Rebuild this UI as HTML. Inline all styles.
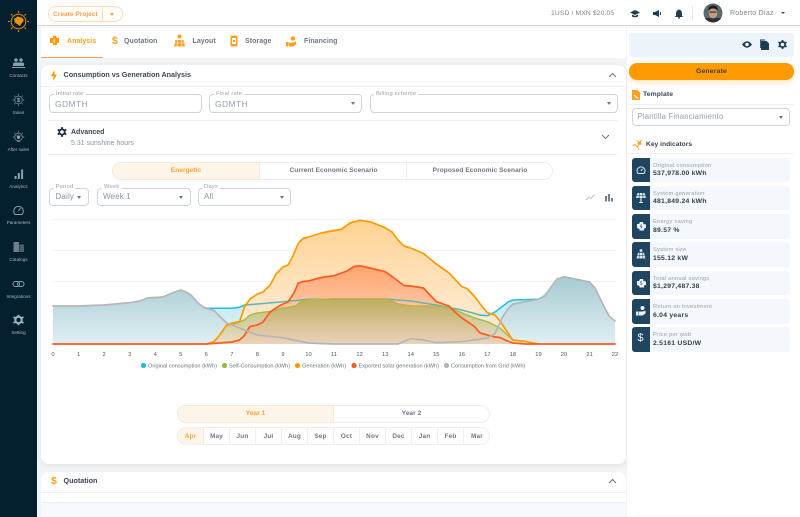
<!DOCTYPE html>
<html><head><meta charset="utf-8"><style>
*{box-sizing:border-box}
html,body{margin:0;padding:0}
body{width:800px;height:517px;overflow:hidden;position:relative;background:#f3f4f6;font-family:"Liberation Sans",sans-serif;color:#3c4654}
#w{position:absolute;left:0;top:0;width:800px;height:517px;overflow:hidden;filter:blur(.3px)}
.a{position:absolute}
.t{position:absolute;white-space:nowrap;line-height:1}
.b{font-weight:700}
.box{position:absolute;border:1px solid #cfd5dd;border-radius:4px;background:#fff}
.lab{position:absolute;background:#fff;padding:0 2px;font-size:5.8px;color:#9aa2ad;white-space:nowrap;line-height:7px;letter-spacing:.2px}
.val{position:absolute;font-size:8.5px;color:#9aa2ad;white-space:nowrap;letter-spacing:.4px;line-height:10px}
.sel{font-size:8px;letter-spacing:.15px;color:#8b93a0}
.car{position:absolute;width:0;height:0;border-left:2.6px solid transparent;border-right:2.6px solid transparent;border-top:3px solid #6d7580}
.line{position:absolute;height:1px;background:#eff0f2}
.side{position:absolute;left:0;width:37px;text-align:center;font-size:4.6px;color:#a9b6be;line-height:6px}
.side svg{position:absolute;left:12px;top:-16px}
.seg{position:absolute;text-align:center;font-weight:700;font-size:6.6px;color:#6f7885;letter-spacing:.05px}
.m{position:absolute;top:0;height:18px;width:26px;border-right:1px solid #eceef0;text-align:center;font-size:6.4px;font-weight:700;color:#6f7885;line-height:17px;letter-spacing:.2px}
.ki{position:absolute;left:632px;width:158px;height:24.5px;background:#f4f7fb;border-radius:3px}
.ki i{position:absolute;left:0;top:0;width:18px;height:100%;background:#1f4560;border-radius:3px 0 0 3px}
.ki svg{position:absolute;left:4px;top:7px}
.ki span{position:absolute;left:21px;top:5px;font-size:5.8px;color:#9aa2ad;white-space:nowrap;letter-spacing:.2px;line-height:7px}
.ki b{position:absolute;left:21px;top:12.5px;font-size:6.8px;color:#34404d;white-space:nowrap;letter-spacing:.25px;line-height:8px}
.tab{position:absolute;top:37px;font-size:7px;font-weight:700;color:#6f7885;line-height:9px;white-space:nowrap;letter-spacing:.05px}
</style></head><body><div id="w">

<!-- top bar -->
<div class="a" style="left:37px;top:0;width:763px;height:26px;background:#fff;border-bottom:1px solid #d6d8da"></div>
<div class="a" style="left:48px;top:6px;width:75px;height:16px;border:1px solid #ffdcb0;border-radius:8px;background:#fff"></div>
<div class="a" style="left:102px;top:7px;width:1px;height:14px;background:#ffdcb0"></div>
<div class="t b" style="left:53px;top:12px;font-size:6.6px;color:#ff9f40">Create Project</div>
<div class="car" style="left:110px;top:13px;border-top-color:#ff9f40"></div>
<div class="t" style="left:551px;top:11px;font-size:6.8px;color:#7e8691;letter-spacing:.1px">1USD / MXN $20.05</div>
<svg class="a" style="left:630px;top:8px" width="55" height="11" viewBox="0 0 55 11" fill="#1f3d52"><path d="M5 2 10 4.5 5 7 0 4.5Z"/><path d="M2 6.500V8.500Q5 10 8 8.500V6.500L5 8Z"/><path d="M23 4h2l4-2v7l-4-2h-2z"/><rect x="30" y="4" width="1" height="3"/><path d="M49 1.500Q52 2 52 6V8L53.500 9H44.500L46 8V6Q46 2 49 1.500Z"/><rect x="48" y="9.200" width="2" height="1.300"/></svg>
<div class="a" style="left:692px;top:6px;width:1px;height:14px;background:#e3e5e8"></div>
<svg class="a" style="left:703px;top:3px" width="20" height="20" viewBox="0 0 20 20"><defs><clipPath id="av"><circle cx="10" cy="10" r="9.500"/></clipPath></defs><g clip-path="url(#av)"><rect width="20" height="20" fill="#5b6a6e"/><rect y="15" width="20" height="5" fill="#2b3338"/><ellipse cx="10" cy="10" rx="4.300" ry="5.500" fill="#c79a7e"/><path d="M5.500 8Q5 2.500 10 2.500T14.500 8Q13 5.500 10 5.500T5.500 8Z" fill="#1d1d1f"/><rect x="6.500" y="8.500" width="7" height="1.100" fill="#2a2a2a"/></g></svg>
<div class="t" style="left:730px;top:9.500px;font-size:7px;color:#7e8691;letter-spacing:.2px">Roberto Díaz</div>
<div class="car" style="left:781px;top:12px;border-left-width:2px;border-right-width:2px;border-top:2.500px solid #3c4654"></div>

<!-- sidebar -->
<div class="a" style="left:0;top:0;width:37px;height:517px;background:#04202f"></div>
<svg class="a" style="left:8px;top:11px" width="21" height="21" viewBox="0 0 21 21" fill="none" stroke="#d98a0c"><circle cx="10.500" cy="10.500" r="7.300" stroke-width="1"/><path d="M6 8l3.500-2.500 4.500 1 2 3-2.500 3-1.500 2.500-2.500-1.800-2.500-1.500z" fill="#e8930f" stroke="none"/><path d="M10.500 0v2M10.500 19v2M0 10.500h2M19 10.500h2M3 3l1.500 1.500M16.500 16.500 18 18M18 3l-1.500 1.500M4.500 16.500 3 18" stroke-width="1.100"/></svg>

<div class="side" style="top:73px"><svg width="13" height="12" viewBox="0 0 13 12" fill="#8ea0ab"><circle cx="4" cy="3" r="1.700"/><circle cx="9" cy="3" r="1.700"/><path d="M1 9V7q0-1.500 2-1.500h7q2 0 2 1.500v2zM0 10h13v1H0z"/></svg>Contacts</div>
<div class="side" style="top:110px"><svg width="13" height="12" viewBox="0 0 13 12" fill="none" stroke="#6d818d" stroke-width=".9"><circle cx="6.500" cy="6" r="3.800"/><path d="M6.500 0v1.500M6.500 10.500V12M.8 6h1.500M10.700 6h1.500M2.200 1.700l1 1M9.800 9.300l1 1M10.800 1.700l-1 1M3.200 9.300l-1 1"/><path d="M7.700 4.500H5.800v1.500h1.500v1.500H5.300" stroke="#8ea0ab"/></svg>Sales</div>
<div class="side" style="top:147px"><svg width="13" height="12" viewBox="0 0 13 12" fill="none" stroke="#6d818d" stroke-width=".9"><circle cx="6.500" cy="6" r="3.800"/><path d="M6.500 0v1.500M.8 6h1.500M10.700 6h1.500M2.200 1.700l1 1M10.800 1.700l-1 1M5 10.500h3"/><path d="M4.500 4.500h4L7.500 8h-2z" fill="#8ea0ab" stroke="none"/></svg>After sales</div>
<div class="side" style="top:184px"><svg width="13" height="12" viewBox="0 0 13 12" fill="#8ea0ab"><rect x="2.500" y="8" width="2" height="3"/><rect x="5.800" y="5" width="2" height="6"/><rect x="9.100" y="1.500" width="2" height="9.500"/></svg>Analytics</div>
<div class="side" style="top:220px"><svg width="13" height="12" viewBox="0 0 13 12" fill="none" stroke="#8ea0ab"><path d="M3 10.500A4.800 4.800 0 1 1 10 10.500Z"/><path d="M6.500 7 8.500 4"/></svg>Parameters</div>
<div class="side" style="top:257px"><svg width="13" height="12" viewBox="0 0 13 12" fill="#6d818d"><rect x="1.500" y="1" width="5.500" height="10"/><rect x="7.500" y="3.500" width="4.500" height="7.500" fill="#4a606d"/></svg>Catalogs</div>
<div class="side" style="top:294px"><svg width="13" height="12" viewBox="0 0 13 12" fill="none" stroke="#8ea0ab"><rect x="1" y="3.500" width="6.500" height="5" rx="2.500"/><rect x="5.500" y="3.500" width="6.500" height="5" rx="2.500"/></svg>Integrations</div>
<div class="side" style="top:330px"><svg width="13" height="12" viewBox="0 0 13 12" fill="none"><circle cx="6.500" cy="6" r="3.200" stroke="#a3b1ba" stroke-width="2"/><path d="M6.500 .8v2M6.500 9.200v2M1.500 3l1.700 1M9.800 8l1.700 1M11.500 3 9.800 4M3.200 8l-1.700 1" stroke="#a3b1ba" stroke-width="1.800"/></svg>Setting</div>

<!-- tabs strip -->
<div class="a" style="left:41px;top:27px;width:585px;height:31px;background:#fff"></div>
<div class="a" style="left:41px;top:57px;width:62px;height:1px;background:#ff9f40"></div>
<svg class="a" style="left:49px;top:35px" width="11" height="11" viewBox="0 0 11 11" fill="#ff9800"><path d="M1 3h3V1h3l1 2h2v5H8v2H4V8H1z"/><path d="M5.500 3.500 4.500 6H6L5 8.500" stroke="#fff" stroke-width=".6" fill="none"/></svg>
<div class="tab" style="left:67px;color:#ff9f1f">Analysis</div>
<div class="t b" style="left:112px;top:35.500px;font-size:10.500px;color:#ff9f1f">$</div>
<div class="tab" style="left:124px">Quotation</div>
<svg class="a" style="left:173px;top:34px" width="13" height="13" viewBox="0 0 13 13" fill="#ff9f1f"><circle cx="6.500" cy="2.500" r="2"/><path d="M2.500 6h8l1.500 6.500H1z"/><path d="M0 9h13M4.500 6 4 13M8.500 6 9 13" stroke="#fff" stroke-width=".6"/></svg>
<div class="tab" style="left:192.500px">Layout</div>
<svg class="a" style="left:230px;top:35px" width="9" height="12" viewBox="0 0 9 12"><rect x=".5" y=".5" width="7" height="11" rx="1" fill="#ff9f1f"/><rect x="2" y="3" width="4" height="6" fill="#fff"/><rect x="3" y="5" width="2" height="2" fill="#ff9f1f"/></svg>
<div class="tab" style="left:245px">Storage</div>
<svg class="a" style="left:286px;top:36px" width="11" height="11" viewBox="0 0 11 11" fill="#ff9f1f"><circle cx="7" cy="2.500" r="2.200"/><rect x="0" y="6" width="2.500" height="4.500"/><path d="M3 6.500h4l3-1v3L7 10.500H3z"/></svg>
<div class="tab" style="left:304px">Financing</div>

<!-- main card -->
<div class="a" style="left:41px;top:65px;width:585px;height:399px;background:#fff;border-radius:8px;box-shadow:0 2px 6px rgba(60,70,80,.1)"></div>
<svg class="a" style="left:51px;top:70px" width="6" height="11" viewBox="0 0 6 11" fill="#ff9800"><path d="M3.500 0 0 6h2.500L2 11 6 4.500H3.500z"/></svg>
<div class="t b" style="left:63.500px;top:71px;font-size:7.200px;color:#3c4654">Consumption vs Generation Analysis</div>
<svg class="a" style="left:608px;top:72px" width="9" height="6" viewBox="0 0 9 6" fill="none" stroke="#6d7580" stroke-width="1"><path d="M1 5 4.500 1.500 8 5"/></svg>
<div class="line" style="left:41px;top:86px;width:585px"></div>

<div class="box" style="left:48.500px;top:94px;width:153px;height:18.500px"></div>
<div class="lab" style="left:54px;top:90.500px">Initial rate</div>
<div class="val" style="left:55px;top:98.500px">GDMTH</div>
<div class="box" style="left:208.500px;top:94px;width:153px;height:18.500px"></div>
<div class="lab" style="left:214px;top:90.500px">Final rate</div>
<div class="val" style="left:215px;top:98.500px">GDMTH</div>
<div class="car" style="left:351px;top:102px"></div>
<div class="box" style="left:369.500px;top:94px;width:248px;height:18.500px"></div>
<div class="lab" style="left:374px;top:90.500px">Billing scheme</div>
<div class="car" style="left:607px;top:102px"></div>
<div class="line" style="left:48px;top:120px;width:570px"></div>

<svg class="a" style="left:57px;top:127px" width="10" height="10" viewBox="0 0 10 10" fill="none"><circle cx="5" cy="5" r="2.700" stroke="#1d2f3c" stroke-width="1.800"/><path d="M5 0v2M5 8v2M.7 2.500l1.700 1M7.600 6.500l1.700 1M9.300 2.500l-1.700 1M2.400 6.500l-1.700 1" stroke="#1d2f3c" stroke-width="1.700"/></svg>
<div class="t b" style="left:71px;top:128.500px;font-size:7px;color:#3c4654">Advanced</div>
<div class="t" style="left:71px;top:140.500px;font-size:6.900px;color:#8b93a0;letter-spacing:.05px">5.31 sunshine hours</div>
<svg class="a" style="left:601px;top:134px" width="9" height="6" viewBox="0 0 9 6" fill="none" stroke="#6d7580" stroke-width="1"><path d="M1 1 4.500 4.500 8 1"/></svg>
<div class="line" style="left:48px;top:154px;width:570px"></div>

<div class="a" style="left:112px;top:162px;width:441px;height:18px;border:1px solid #eceef0;border-radius:9px;background:#fff"></div>
<div class="a" style="left:112px;top:162px;width:148px;height:18px;border:1px solid #f6e9d8;border-radius:9px 0 0 9px;background:#fdf5ea"></div>
<div class="a" style="left:406px;top:162px;width:1px;height:18px;background:#eceef0"></div>
<div class="seg" style="left:112px;top:167px;width:148px;color:#ffa02e">Energetic</div>
<div class="seg" style="left:260px;top:167px;width:147px">Current Economic Scenario</div>
<div class="seg" style="left:407px;top:167px;width:146px">Proposed Economic Scenario</div>

<div class="box" style="left:48.500px;top:187.500px;width:40.500px;height:18.500px"></div>
<div class="lab" style="left:53.500px;top:183.500px">Period</div>
<div class="val sel" style="left:55.500px;top:191.500px">Daily</div>
<div class="car" style="left:77px;top:195.500px"></div>
<div class="box" style="left:97px;top:187.500px;width:93.500px;height:18.500px"></div>
<div class="lab" style="left:102px;top:183.500px">Week</div>
<div class="val sel" style="left:103px;top:191.500px">Week 1</div>
<div class="car" style="left:179px;top:195.500px"></div>
<div class="box" style="left:197.500px;top:187.500px;width:93.500px;height:18.500px"></div>
<div class="lab" style="left:202px;top:183.500px">Days</div>
<div class="val sel" style="left:204px;top:191.500px">All</div>
<div class="car" style="left:280px;top:195.500px"></div>
<svg class="a" style="left:585px;top:193px" width="30" height="9" viewBox="0 0 30 9" fill="none"><path d="M1 7 4 4 6 5.500 9.500 1.500" stroke="#b9bec5"/><g fill="#6f7f8e"><rect x="20" y="3" width="2" height="5.500"/><rect x="23" y="1" width="2" height="7.500"/><rect x="26" y="5" width="2" height="3.500"/></g></svg>

<!-- chart -->
<svg class="a" style="left:0;top:0" width="800" height="517" viewBox="0 0 800 517" fill="none">
<defs>
<linearGradient id="gc" gradientUnits="userSpaceOnUse" x1="0" y1="280" x2="0" y2="344"><stop offset="0" stop-color="#b2e6f0"/><stop offset="1" stop-color="#e4f5f8"/></linearGradient>
<linearGradient id="gg" gradientUnits="userSpaceOnUse" x1="0" y1="280" x2="0" y2="344"><stop offset="0" stop-color="#a9ccd5"/><stop offset="1" stop-color="#e1f0f3"/></linearGradient>
<linearGradient id="go" gradientUnits="userSpaceOnUse" x1="0" y1="220" x2="0" y2="344"><stop offset="0" stop-color="#ffcf8c" stop-opacity=".95"/><stop offset="1" stop-color="#ffeeda" stop-opacity=".85"/></linearGradient>
<linearGradient id="gr" gradientUnits="userSpaceOnUse" x1="0" y1="265" x2="0" y2="344"><stop offset="0" stop-color="#ff945c" stop-opacity=".8"/><stop offset="1" stop-color="#ffd5bd" stop-opacity=".6"/></linearGradient>
<linearGradient id="gv" gradientUnits="userSpaceOnUse" x1="0" y1="298" x2="0" y2="344"><stop offset="0" stop-color="#90a63a" stop-opacity=".62"/><stop offset="1" stop-color="#a8a878" stop-opacity=".22"/></linearGradient>
</defs>
<g stroke="#f3f3f3" stroke-width="1.200"><path d="M53 219.500H616M53 250.500H616M53 281.500H616M53 312.500H616"/></g>

<path fill="url(#gc)" d="M53 306 78.600 306 104 305 129.700 302.700 140 301 147.500 298 162.900 297 172 293 180.800 290 186 292 191 295 198 303 203.700 307.300 206.300 308.300 231.900 308.300 239.500 307.300 244.600 305 257.400 304 283 301.700 308.500 299.300 385.200 299 410.700 301 436.300 305 461.800 310 480 315 487.400 315.700 495 312 500 308.300 508 302 512.900 300 538.500 299.300 551.200 286.700 557 279 564 276.700 589.600 282 595 288 602.300 303 609 316 615 321V344H53Z"/>
<path fill="url(#gg)" d="M53 306 78.600 306 104 305 129.700 302.700 140 301 147.500 298 162.900 297 172 293 180.800 290 186 292 191 295 198 303 203.700 307.300 214 310.700 226.700 323 239.500 328 257.400 335 283 337.700 295.700 340.500 308.500 343 334 344 398 344 410.700 338.700 423.500 340 436.300 342.700 461.800 341.700 487.400 338 495 333.500 502.700 316.700 508 309 512.900 304 538.500 299.300 545 296 551.200 286.700 557 279 564 276.700 589.600 282 595 288 602.300 303 609 316 615 321V344H53Z"/>
<path fill="url(#go)" d="M206.300 344 214 341.500 219 336 226.700 325 231.900 323 239.500 321.700 244.600 306.700 250 299 257.400 294 263 292 270.200 285 276 274 283 267 288 265 292 258 298.300 243.400 303 238.500 308.500 237 321.300 233 334 230.500 341 229.500 350 223 359.600 220.300 370 221.700 385.200 227.700 392 232 398 240 404 246 410.700 248 423.500 253.500 436.300 264 449 273 461.800 286.700 467 288.500 474.600 296.500 481 305 487.400 312.700 495 315 500 321 506 330 512.900 340 525.700 341.500 538.500 344Z"/>
<path fill="url(#gr)" d="M206.300 344 231.900 342 239.500 340 244 336 249.700 326.700 257.400 325 263 322 270.200 312 276 308 283 304 288 302 294 293 298.300 283 303 281.500 308.500 281 321.300 277.500 334 275.700 347 271 354 266.500 359.600 265.700 372 268.500 385.200 271.700 392 276.500 398 281 404 285.500 410.700 286 423.500 288 430 295 436.300 301.700 449 306 455 312 461.800 318 468 322 474.600 326.700 480 333 487.400 335 495 337 500 337.500 506 340.500 512.900 343 525.700 344Z"/>
<path fill="url(#gv)" d="M206.300 344 214 341.500 219 336 226.700 325 231.900 325 244.600 320 250 315 257.400 313 270.200 311.500 275.300 310 283 308 295.700 306 300 302 308.500 300 334 298.700 385.200 299 392 301 398 304 410.700 306 436.300 306 449 308 461.800 312.700 474.600 318 487.400 321.700 500 328 512.900 340 525.700 343 538.500 344Z"/>

<g stroke-width="1.500" stroke-linejoin="round" stroke-linecap="round">
<path stroke="#1fc0d8" d="M203.700 307.300 206.300 308.300 231.900 308.300 239.500 307.300 244.600 305"/>
<path stroke="#1fc0d8" d="M480 315 487.400 315.700 495 312 500 308.300 508 302 512.900 300 538.500 299.300"/>
<path stroke="#62b5ad" d="M244.600 305 257.400 304 283 301.700 308.500 299.300 385.200 299 410.700 301 436.300 305 461.800 310 480 315"/>
<path stroke="#a6bd4c" d="M226.700 325 231.900 325 244.600 320 250 315 257.400 313 270.200 311.500 275.300 310 283 308 295.700 306"/>
<path stroke="#c9ad40" d="M295.700 306 300 302 308.500 300 334 298.700 385.200 299 392 301 398 304 410.700 306 436.300 306"/>
<path stroke="#a6bd4c" d="M436.300 306 449 308 461.800 312.700 474.600 318 487.400 321.700 500 328 512.900 340"/>
<path stroke="#ff9a00" stroke-width="1.700" d="M206.300 344 214 341.500 219 336 226.700 325 231.900 323 239.500 321.700 244.600 306.700 250 299 257.400 294 263 292 270.200 285 276 274 283 267 288 265 292 258 298.300 243.400 303 238.500 308.500 237 321.300 233 334 230.500 341 229.500 350 223 359.600 220.300 370 221.700 385.200 227.700 392 232 398 240 404 246 410.700 248 423.500 253.500 436.300 264 449 273 461.800 286.700 467 288.500 474.600 296.500 481 305 487.400 312.700 495 315 500 321 506 330 512.900 340 525.700 341.500 538.500 344"/>
<path stroke="#ff5a1f" stroke-width="1.700" d="M53 344 206.300 344 231.900 342 239.500 340 244 336 249.700 326.700 257.400 325 263 322 270.200 312 276 308 283 304 288 302 294 293 298.300 283 303 281.500 308.500 281 321.300 277.500 334 275.700 347 271 354 266.500 359.600 265.700 372 268.500 385.200 271.700 392 276.500 398 281 404 285.500 410.700 286 423.500 288 430 295 436.300 301.700 449 306 455 312 461.800 318 468 322 474.600 326.700 480 333 487.400 335 495 337 500 337.500 506 340.500 512.900 343 525.700 344 615 344"/>
<path stroke="#b5b5b9" stroke-width="1.700" d="M53 306 78.600 306 104 305 129.700 302.700 140 301 147.500 298 162.900 297 172 293 180.800 290 186 292 191 295 198 303 203.700 307.300 214 310.700 226.700 323 239.500 328 257.400 335 283 337.700 295.700 340.500 308.500 343 334 344 398 344 410.700 338.700 423.500 340 436.300 342.700 461.800 341.700 487.400 338 495 333.500 502.700 316.700 508 309 512.900 304 538.500 299.300 545 296 551.200 286.700 557 279 564 276.700 589.600 282 595 288 602.300 303 609 316 615 321"/>
</g>
<g fill="#4c5560" font-family="Liberation Sans, sans-serif" font-size="5.800" text-anchor="middle">
<text x="53" y="356">0</text><text x="78.600" y="356">1</text><text x="104.100" y="356">2</text><text x="129.700" y="356">3</text><text x="155.200" y="356">4</text><text x="180.800" y="356">5</text><text x="206.300" y="356">6</text><text x="231.900" y="356">7</text><text x="257.400" y="356">8</text><text x="283" y="356">9</text><text x="308.500" y="356">10</text><text x="334" y="356">11</text><text x="359.600" y="356">12</text><text x="385.200" y="356">13</text><text x="410.700" y="356">14</text><text x="436.300" y="356">15</text><text x="461.800" y="356">16</text><text x="487.400" y="356">17</text><text x="512.900" y="356">18</text><text x="538.500" y="356">19</text><text x="564" y="356">20</text><text x="589.600" y="356">21</text><text x="615" y="356">22</text>
</g>
<circle cx="143.500" cy="365.500" r="2.600" fill="#1fc0d8"/><circle cx="224.500" cy="365.500" r="2.600" fill="#8fbc3a"/><circle cx="297.500" cy="365.500" r="2.600" fill="#ff9a00"/><circle cx="354" cy="365.500" r="2.600" fill="#ff5a1f"/><circle cx="446.500" cy="365.500" r="2.600" fill="#b5b5b9"/>
<g fill="#6b7480" font-family="Liberation Sans, sans-serif" font-size="5.600">
<text x="148" y="367.500">Original consumption (kWh)</text><text x="229" y="367.500">Self-Consumption (kWh)</text><text x="302" y="367.500">Generation (kWh)</text><text x="358.500" y="367.500">Exported solar generation (kWh)</text><text x="451" y="367.500">Consumption from Grid (kWh)</text>
</g>
</svg>

<!-- year tabs -->
<div class="a" style="left:177px;top:405px;width:313px;height:18px;border:1px solid #eceef0;border-radius:9px;background:#fff"></div>
<div class="a" style="left:177px;top:405px;width:156.500px;height:18px;border:1px solid #f6e9d8;border-radius:9px 0 0 9px;background:#fdf5ea"></div>
<div class="seg" style="left:177px;top:410px;width:157px;color:#ffa02e">Year 1</div>
<div class="seg" style="left:333px;top:410px;width:157px">Year 2</div>

<div class="a" style="left:177px;top:427px;width:313px;height:18px;border:1px solid #eceef0;border-radius:9px;background:#fff;overflow:hidden">
<div class="m" style="left:0;background:#fdf5ea;border-right-color:#f3e6d3;color:#ffa02e">Apr</div><div class="m" style="left:26px">May</div><div class="m" style="left:52px">Jun</div><div class="m" style="left:78px">Jul</div><div class="m" style="left:104px">Aug</div><div class="m" style="left:130px">Sep</div><div class="m" style="left:156px">Oct</div><div class="m" style="left:182px">Nov</div><div class="m" style="left:208px">Dec</div><div class="m" style="left:234px">Jan</div><div class="m" style="left:260px">Feb</div><div class="m" style="left:286px;border:0">Mar</div>
</div>

<!-- quotation card -->
<div class="a" style="left:41px;top:472px;width:585px;height:45px;background:#fff;border-radius:8px 8px 0 0"></div>
<div class="t b" style="left:51px;top:476px;font-size:10.500px;color:#ff9f1f">$</div>
<div class="t b" style="left:63.500px;top:477px;font-size:7.200px;color:#3c4654">Quotation</div>
<svg class="a" style="left:608px;top:478px" width="9" height="6" viewBox="0 0 9 6" fill="none" stroke="#6d7580"><path d="M1 5 4.500 1.500 8 5"/></svg>
<div class="line" style="left:41px;top:492px;width:585px"></div>
<div class="a" style="left:41px;top:502px;width:585px;height:15px;background:#f6fafd;border-top:1px solid #e8eef3"></div>

<!-- right panel -->
<div class="a" style="left:627px;top:27px;width:173px;height:490px;background:#fff"></div>
<div class="a" style="left:629px;top:33px;width:164.500px;height:23.500px;background:#edf3fb;border-radius:3px"></div>
<svg class="a" style="left:741px;top:38px" width="46" height="13" viewBox="0 0 46 13"><path d="M1 6.500Q6 0 11 6.500 6 13 1 6.500Z" fill="#1f3d52"/><circle cx="6" cy="6.500" r="1.800" fill="#edf3fb"/><path d="M20 3V12H28V5.500L25.500 3Z" fill="#1f3d52"/><path d="M19 1.500H24V2.500H19.800V10H19Z" fill="#1f3d52"/><circle cx="41.500" cy="6.500" r="2.700" fill="none" stroke="#1f3d52" stroke-width="1.800"/><path d="M41.500 2v2M41.500 9v2M37.500 4.200l1.700 1M43.800 7.800l1.700 1M45.500 4.200l-1.700 1M39.200 7.800l-1.700 1" stroke="#1f3d52" stroke-width="1.700"/></svg>
<div class="a" style="left:629px;top:63px;width:165px;height:16.500px;background:#ff9b00;border-radius:8px;box-shadow:0 3px 6px rgba(255,155,0,.22)"></div>
<div class="t b" style="left:629px;top:68.500px;width:165px;text-align:center;font-size:6.800px;color:#3c3a2a;letter-spacing:.2px">Generate</div>
<svg class="a" style="left:632px;top:90px" width="8" height="10" viewBox="0 0 8 10"><path d="M0 0H5.500L8 2.500V10H0Z" fill="#ff9f1f"/><path d="M2 5 6 8.500" stroke="#fff" stroke-width="1.200"/></svg>
<div class="t b" style="left:643px;top:92px;font-size:6.800px;color:#3c4654;letter-spacing:.1px">Template</div>
<div class="line" style="left:629px;top:104px;width:165px"></div>
<div class="box" style="left:632px;top:108px;width:158px;height:17.500px"></div>
<div class="val" style="left:637.500px;top:112px;letter-spacing:.15px;font-size:7.800px">Plantilla Financiamiento</div>
<div class="car" style="left:779px;top:115.500px"></div>
<svg class="a" style="left:632px;top:139px" width="11" height="11" viewBox="0 0 11 11" fill="none" stroke="#ff9f1f" stroke-width="1"><path d="M.5 7 3 5.500 5.500 8 7.500 4 9.500 1M9 5.500 7.500 4M5 1.500l1 1"/><circle cx="7.500" cy="4" r="1.200" fill="#ff9f1f"/><path d="M6 9.500 7.500 10.500"/></svg>
<div class="t b" style="left:646px;top:142px;font-size:6.700px;color:#3c4654">Key indicators</div>
<div class="line" style="left:629px;top:153px;width:165px"></div>

<div class="ki" style="top:157.500px"><i></i><svg width="10" height="10" viewBox="0 0 10 10" fill="none" stroke="#dfe6ec"><path d="M2 8.500A4 4 0 1 1 8 8.500Z"/><path d="M5 6 6.500 3.800"/></svg><span>Original consumption</span><b>537,978.00 kWh</b></div>
<div class="ki" style="top:185.800px"><i></i><svg width="10" height="10" viewBox="0 0 10 10" fill="#dfe6ec"><path d="M1.500 0H8.500L10 5H0Z"/><path d="M3.500 0 3 5M6.500 0 7 5M.7 2.500H9.300" stroke="#1f4560" stroke-width=".6"/><rect x="4.400" y="5" width="1.200" height="4"/><rect x="3" y="9" width="4" height="1"/></svg><span>System generation</span><b>481,849.24 kWh</b></div>
<div class="ki" style="top:214.100px"><i></i><svg width="10" height="10" viewBox="0 0 10 10" fill="#eef2f5"><path d="M1 3H3L4 1H7L7.500 3 10 3.500V7L8 7.500V9.500H3.500V8L1 7Z"/><path d="M5.500 3 4.500 5.500H6L5 7.500" stroke="#1f4560" stroke-width=".6" fill="none"/></svg><span>Energy saving</span><b>89.57 %</b></div>
<div class="ki" style="top:242.400px"><i></i><svg width="10" height="10" viewBox="0 0 10 10" fill="#dfe6ec"><circle cx="5" cy="1.500" r="1.400"/><path d="M2 3.800H8L9.500 9.500H.5Z"/><path d="M1 6.500H9M3.500 3.800 3 9.500M6.500 3.800 7 9.500" stroke="#1f4560" stroke-width=".5"/></svg><span>System size</span><b>155.12 kW</b></div>
<div class="ki" style="top:270.700px"><i></i><svg width="10" height="10" viewBox="0 0 10 10" fill="#eef2f5"><path d="M1 3H3L4 1H7L7.500 3 10 3.500V7L8 7.500V9.500H3.500V8L1 7Z"/><path d="M6 3.500H4.500V5H6V6.500H4.300" stroke="#1f4560" stroke-width=".5" fill="none"/></svg><span>Total annual savings</span><b>$1,297,487.38</b></div>
<div class="ki" style="top:299px"><i></i><svg width="10" height="10" viewBox="0 0 10 10" fill="#eef2f5"><circle cx="6.500" cy="2" r="2"/><rect x="0" y="5.500" width="2" height="4"/><path d="M2.500 5.500H6.500L9.500 4.800V7.500L6.500 9.500H2.500Z"/></svg><span>Return on investment</span><b>6.04 years</b></div>
<div class="ki" style="top:327.300px"><i></i><div class="t" style="left:5.500px;top:6px;font-size:11px;color:#eef2f5">$</div><span>Price per watt</span><b>2.5161 USD/W</b></div>
</div></body></html>
